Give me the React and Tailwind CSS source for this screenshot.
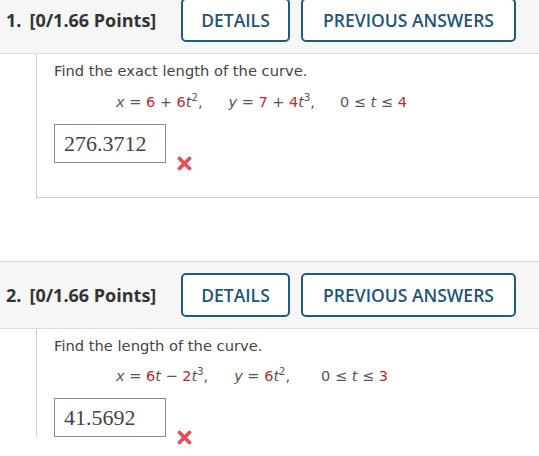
import React from "react";

const bodyFont = { fontFamily: '"DejaVu Sans", Verdana, sans-serif' };

function RedX() {
  return (
    <svg width="15" height="15" viewBox="0 0 15 15" className="block">
      <path d="M2.5 2.5 L12.5 12.5 M12.5 2.5 L2.5 12.5" stroke="#e4505a" strokeWidth="3.8" strokeLinecap="round" />
    </svg>
  );
}

function Header({ num, first }) {
  return (
    <div
      className={`flex items-center h-[68px] bg-[#f6f6f6] border-t border-b border-[#dcdcdc] ${first ? "mt-[-14px]" : ""}`}
      style={{ fontFamily: '"Open Sans", sans-serif' }}
    >
      <div className="w-[181px] pl-[6px] text-[18px] font-bold text-[#333] whitespace-nowrap">
        <span className="mr-[8px]">{num}.</span>[0/1.66 Points]
      </div>
      <button className="w-[109px] h-[44px] border-2 border-[#1d5c7c] rounded-[5px] bg-white text-[#1f5578] text-[17.5px] font-semibold">
        DETAILS
      </button>
      <button className="ml-[11px] w-[215px] h-[44px] border-2 border-[#1d5c7c] rounded-[5px] bg-white text-[#1f5578] text-[17.5px] font-semibold">
        PREVIOUS ANSWERS
      </button>
    </div>
  );
}

const R = ({ children }) => <span className="text-[#c0282c]">{children}</span>;
const I = ({ children }) => <span className="italic">{children}</span>;
const Sup = ({ children }) => <sup className="text-[10px] relative top-[-6px]">{children}</sup>;

function Answer({ value }) {
  return (
    <div className="flex items-end mt-[12px]">
      <div
        className="w-[112px] h-[39px] border border-[#8a8a8a] pl-[9px] flex items-center text-[22px] text-[#444]"
        style={{ fontFamily: '"Liberation Serif", "Times New Roman", serif' }}
      >
        {value}
      </div>
      <div className="ml-[11px] mb-[-8px]">
        <RedX />
      </div>
    </div>
  );
}

export default function App() {
  return (
    <div className="w-[539px] h-[456px] overflow-hidden bg-white">
      <Header num={1} first />
      <div className="ml-[36px] border-l border-b border-[#cccccc] pl-[17px] pt-[7px] pb-[34px] text-[#444]" style={bodyFont}>
        <p className="text-[14.7px] leading-[20px]">Find the exact length of the curve.</p>
        <div className="flex text-[14.5px] leading-[20px] mt-[11px] pl-[62px] text-[#555] whitespace-pre">
          <span>
            <I>x</I> = <R>6</R> + <R>6</R><I>t</I><Sup>2</Sup>,
          </span>
          <span className="ml-[26px]">
            <I>y</I> = <R>7</R> + <R>4</R><I>t</I><Sup>3</Sup>,
          </span>
          <span className="ml-[25px]">
            0 ≤ <I>t</I> ≤ <R>4</R>
          </span>
        </div>
        <Answer value="276.3712" />
      </div>

      <div className="mt-[63px]">
        <Header num={2} />
        <div className="ml-[36px] border-l border-[#cccccc] pl-[17px] pt-[7px] text-[#444]" style={bodyFont}>
          <p className="text-[14.7px] leading-[20px]">Find the length of the curve.</p>
          <div className="flex text-[14.5px] leading-[20px] mt-[10px] pl-[62px] text-[#555] whitespace-pre">
            <span>
              <I>x</I> = <R>6</R><I>t</I> − <R>2</R><I>t</I><Sup>3</Sup>,
            </span>
            <span className="ml-[26px]">
              <I>y</I> = <R>6</R><I>t</I><Sup>2</Sup>,
            </span>
            <span className="ml-[31px]">
              0 ≤ <I>t</I> ≤ <R>3</R>
            </span>
          </div>
          <Answer value="41.5692" />
        </div>
      </div>
    </div>
  );
}
